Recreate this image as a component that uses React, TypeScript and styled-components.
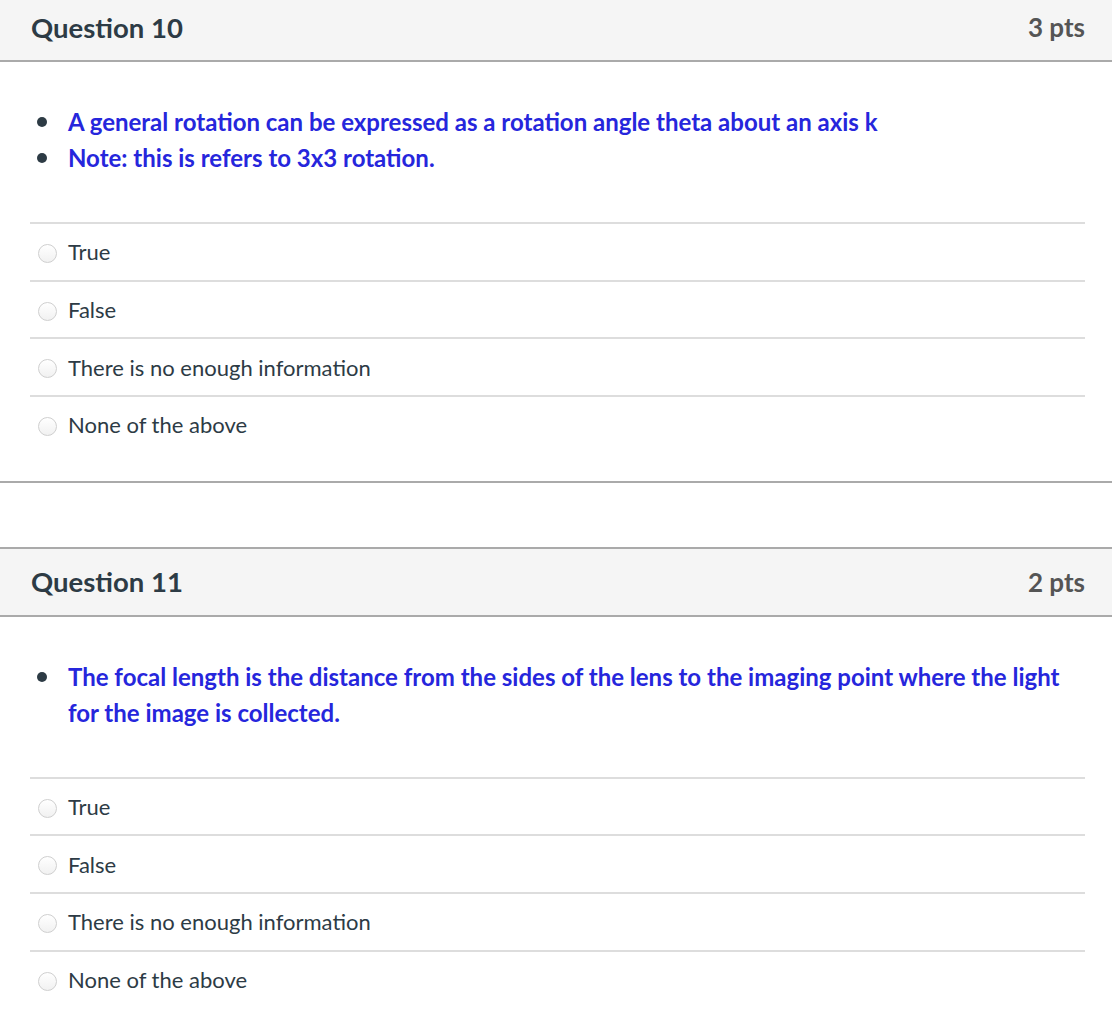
import { createGlobalStyle, styled } from "styled-components";

interface Question {
  id: number;
  title: string;
  points: string;
  statements: string[];
  answers: string[];
}

const questions: Question[] = [
  {
    id: 10,
    title: "Question 10",
    points: "3 pts",
    statements: [
      "A general rotation can be expressed as a rotation angle theta about an axis k",
      "Note: this is refers to 3x3 rotation.",
    ],
    answers: ["True", "False", "There is no enough information", "None of the above"],
  },
  {
    id: 11,
    title: "Question 11",
    points: "2 pts",
    statements: [
      "The focal length is the distance from the sides of the lens to the imaging point where the light for the image is collected.",
    ],
    answers: ["True", "False", "There is no enough information", "None of the above"],
  },
];

const GlobalStyle = createGlobalStyle`
  body {
    margin: 0;
    background: #ffffff;
    font-family: Lato, "Open Sans", "Liberation Sans", sans-serif;
    color: #2d3b45;
  }
`;

const Page = styled.div`
  display: flex;
  flex-direction: column;
  gap: 64px;
  margin-top: -8px;
`;

const Card = styled.section`
  border-top: 2px solid #aaaaaa;
  border-bottom: 2px solid #aaaaaa;
  background: #ffffff;
`;

const Header = styled.header`
  display: flex;
  justify-content: space-between;
  align-items: center;
  height: 66px;
  padding: 0 27px 0 31px;
  background: #f5f5f5;
  border-bottom: 2px solid #aaaaaa;
`;

const Title = styled.h2`
  margin: 0;
  font-size: 27.5px;
  font-weight: 700;
  color: #2d3b45;
`;

const Points = styled.span`
  font-size: 26px;
  font-weight: 700;
  color: #555555;
`;

const Body = styled.div`
  padding: 42px 27px 28px 30px;
`;

const Statements = styled.ul`
  margin: 0 0 46px;
  padding: 0 0 0 38px;
  list-style: none;
`;

const Statement = styled.li`
  position: relative;
  font-size: 24px;
  font-weight: 700;
  line-height: 36px;
  color: #2626dc;

  &::before {
    content: "";
    position: absolute;
    left: -31px;
    top: 13px;
    width: 10px;
    height: 10px;
    border-radius: 50%;
    background: #2d3b45;
  }
`;

const Answers = styled.div`
  display: flex;
  flex-direction: column;
`;

const Answer = styled.label`
  display: flex;
  align-items: center;
  gap: 11px;
  height: 55.7px;
  padding-left: 8px;
  border-top: 2px solid #dddddd;
  font-size: 22px;
  color: #2d3b45;
`;

const Radio = styled.span`
  flex: none;
  width: 17px;
  height: 17px;
  border-radius: 50%;
  border: 1px solid #cfcfcf;
  background: linear-gradient(#ffffff, #f1f1f1);
  margin-top: 3px;
`;

function QuestionCard({ question }: { question: Question }) {
  return (
    <Card>
      <Header>
        <Title>{question.title}</Title>
        <Points>{question.points}</Points>
      </Header>
      <Body>
        <Statements>
          {question.statements.map((s) => (
            <Statement key={s}>{s}</Statement>
          ))}
        </Statements>
        <Answers>
          {question.answers.map((a) => (
            <Answer key={a}>
              <Radio />
              {a}
            </Answer>
          ))}
        </Answers>
      </Body>
    </Card>
  );
}

export default function App() {
  return (
    <>
      <GlobalStyle />
      <Page>
        {questions.map((q) => (
          <QuestionCard key={q.id} question={q} />
        ))}
      </Page>
    </>
  );
}
